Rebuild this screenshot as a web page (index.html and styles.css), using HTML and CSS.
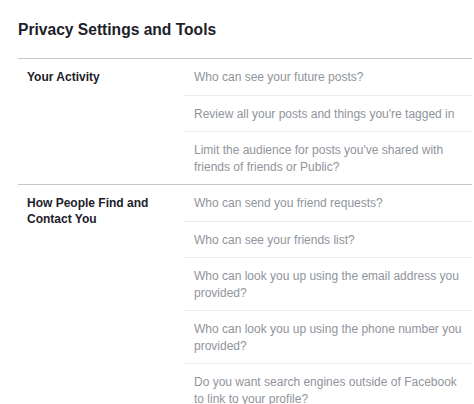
FILE: index.html
```html
<!DOCTYPE html>
<html>
<head>
<meta charset="utf-8">
<link rel="stylesheet" href="styles.css">
</head>
<body>
<div class="page">
  <h1 class="title">Privacy Settings and Tools</h1>
  <div class="section">
    <div class="label">Your Activity</div>
    <ul class="items">
      <li>Who can see your future posts?</li>
      <li>Review all your posts and things you're tagged in</li>
      <li>Limit the audience for posts you've shared with friends of friends or Public?</li>
    </ul>
  </div>
  <div class="section">
    <div class="label">How People Find and Contact You</div>
    <ul class="items">
      <li>Who can send you friend requests?</li>
      <li>Who can see your friends list?</li>
      <li>Who can look you up using the email address you provided?</li>
      <li>Who can look you up using the phone number you provided?</li>
      <li>Do you want search engines outside of Facebook to link to your profile?</li>
    </ul>
  </div>
</div>
</body>
</html>
```

FILE: styles.css
```css
html, body {
  margin: 0;
  padding: 0;
  background: #ffffff;
}
body {
  font-family: "Liberation Sans", Arial, sans-serif;
}
.page {
  padding-left: 18px;
  padding-right: 2px;
}
.title {
  margin: 0;
  padding-top: 21px;
  height: 58px;
  box-sizing: border-box;
  font-size: 15.6px;
  line-height: 18px;
  font-weight: bold;
  color: #1d2129;
}
.section {
  display: flex;
  border-top: 1px solid #c4c7cc;
}
.label {
  width: 166px;
  flex: none;
  box-sizing: border-box;
  padding: 10px 20px 0 9px;
  font-size: 12px;
  line-height: 16px;
  font-weight: bold;
  color: #1d2129;
}
.items {
  list-style: none;
  margin: 0;
  padding: 0;
  flex: 1;
}
.items li {
  padding: 10px 10px 9px 10px;
  font-size: 12px;
  line-height: 16.5px;
  color: #90949c;
  border-top: 1px solid #e9ebee;
}
.items li:first-child {
  border-top: none;
}
```
